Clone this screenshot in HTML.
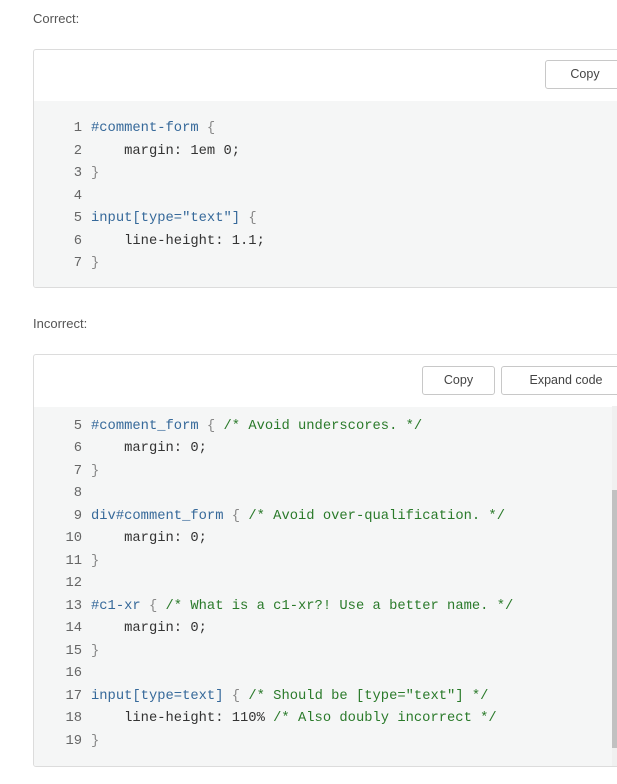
<!DOCTYPE html>
<html><head><meta charset="utf-8"><style>
*{margin:0;padding:0;box-sizing:border-box}
body{width:617px;height:784px;overflow:hidden;background:#fff;font-family:"Liberation Sans",sans-serif;position:relative}
.lbl{position:absolute;left:33px;font-size:13px;color:#555}
.box{position:absolute;left:33px;width:600px;border:1px solid #dcdcdc;border-radius:3px;background:#fff;overflow:hidden}
.btn{position:absolute;height:29px;border:1px solid #c8c8c8;border-radius:3px;background:#fff;font-size:12.5px;color:#444;text-align:center;line-height:27px}
.code{position:absolute;left:0;right:0;bottom:0;background:#f5f6f6;overflow:hidden}
pre{position:absolute;left:0;font-family:"Liberation Mono",monospace;font-size:13.8px;line-height:22.5px;color:#333}
.n{display:inline-block;width:57px;text-align:right;color:#666;padding-right:9px}
.s{color:#36699a}.p{color:#888}.c{color:#2a7a2a}
</style></head><body>
<div class="lbl" style="top:11px">Correct:</div>
<div class="box" style="top:49px;height:239px">
 <div class="btn" style="left:511px;top:10px;width:80px">Copy</div>
 <div class="code" style="top:51px">
<pre style="top:17px"><span class="n">1</span><span class="s">#comment-form</span> <span class="p">{</span>
<span class="n">2</span>    margin: 1em 0;
<span class="n">3</span><span class="p">}</span>
<span class="n">4</span>
<span class="n">5</span><span class="s">input[type="text"]</span> <span class="p">{</span>
<span class="n">6</span>    line-height: 1.1;
<span class="n">7</span><span class="p">}</span></pre>
 </div>
</div>
<div class="lbl" style="top:316px">Incorrect:</div>
<div class="box" style="top:354px;height:413px">
 <div class="btn" style="left:388px;top:11px;width:73px">Copy</div>
 <div class="btn" style="left:467px;top:11px;width:130px">Expand code</div>
 <div class="code" style="top:52px">
<pre style="top:-14px"><span class="n">4</span>
<span class="n">5</span><span class="s">#comment_form</span> <span class="p">{</span> <span class="c">/* Avoid underscores. */</span>
<span class="n">6</span>    margin: 0;
<span class="n">7</span><span class="p">}</span>
<span class="n">8</span>
<span class="n">9</span><span class="s">div#comment_form</span> <span class="p">{</span> <span class="c">/* Avoid over-qualification. */</span>
<span class="n">10</span>    margin: 0;
<span class="n">11</span><span class="p">}</span>
<span class="n">12</span>
<span class="n">13</span><span class="s">#c1-xr</span> <span class="p">{</span> <span class="c">/* What is a c1-xr?! Use a better name. */</span>
<span class="n">14</span>    margin: 0;
<span class="n">15</span><span class="p">}</span>
<span class="n">16</span>
<span class="n">17</span><span class="s">input[type=text]</span> <span class="p">{</span> <span class="c">/* Should be [type="text"] */</span>
<span class="n">18</span>    line-height: 110% <span class="c">/* Also doubly incorrect */</span>
<span class="n">19</span><span class="p">}</span></pre>
 </div>
</div>
<div style="position:absolute;left:612px;top:406px;width:5px;height:360px;background:#f0f0f0"></div>
<div style="position:absolute;left:612px;top:490px;width:5px;height:258px;background:#c1c1c1"></div>
</body></html>
